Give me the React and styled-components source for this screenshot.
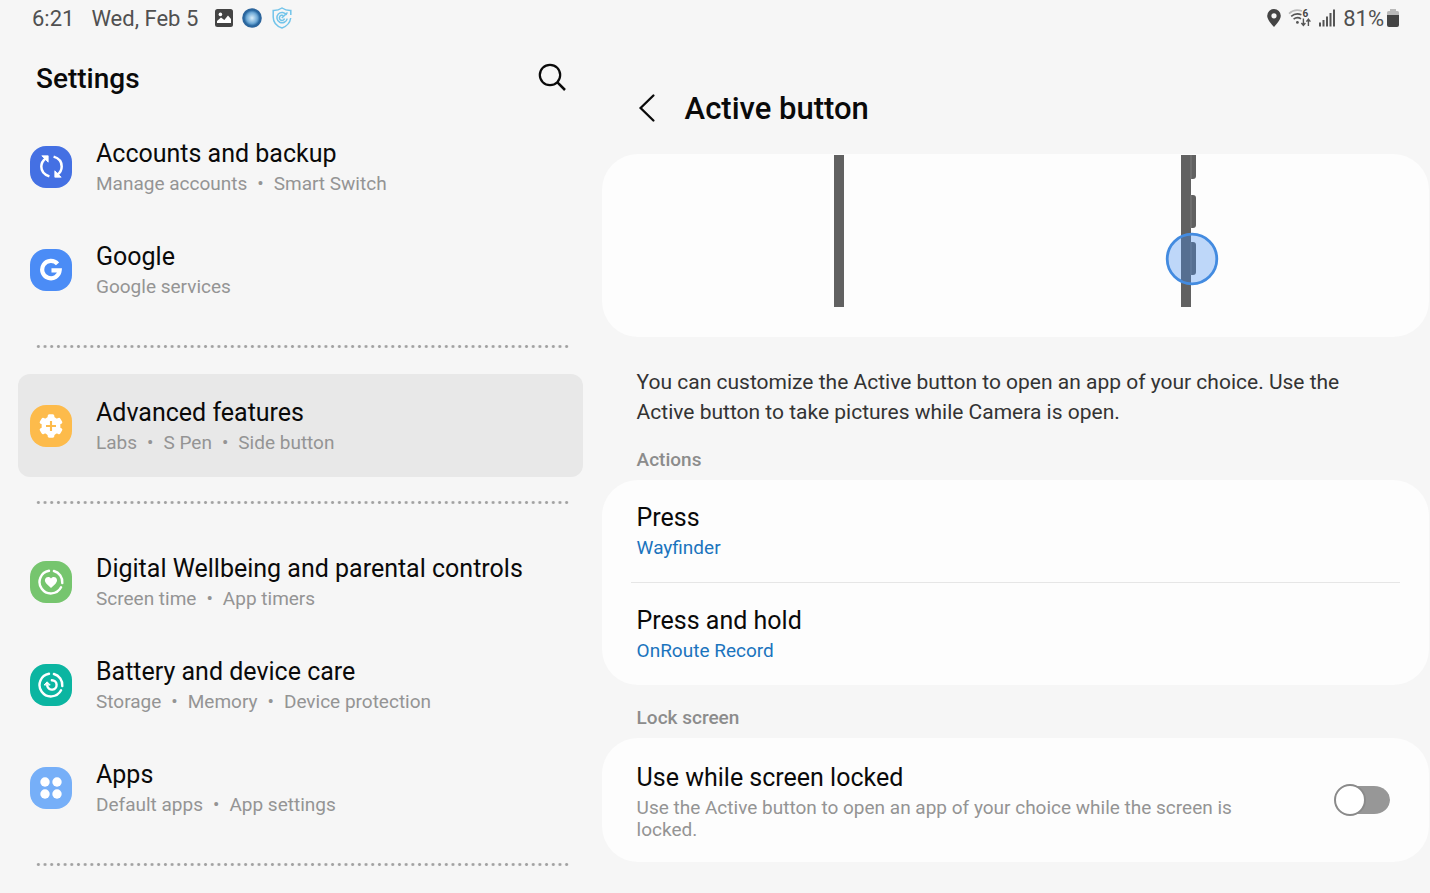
import React, { useState } from 'react';
import styled, { createGlobalStyle } from 'styled-components';

const GlobalStyle = createGlobalStyle`
  *, *::before {
    box-sizing: border-box;
  }

  body {
    margin: 0;
    background-color: #f6f6f6;
    color: #0a0a0a;
    font-family: Roboto, "Liberation Sans", sans-serif;
  }

  svg {
    display: block;
    flex: none;
  }

  h1, h2, h3, p {
    margin: 0;
  }

  button {
    padding: 0;
    border: 0;
    background: none;
    color: inherit;
    font: inherit;
    text-align: left;
    cursor: pointer;
  }
`;

const StatusBar = styled.header`
  display: flex;
  align-items: center;
  justify-content: space-between;
  height: 36px;
  padding: 0 31px 0 32px;
  color: #505050;
  font-size: 22px;
`;

const StatusGroup = styled.div`
  display: flex;
  align-items: center;
  gap: ${props => props.gap};
`;

const Battery = styled.span`
  display: flex;
  align-items: center;
  gap: 3px;
`;

const Panes = styled.div`
  display: grid;
  grid-template-columns: 42fr 58fr;
`;

const Sidebar = styled.aside`
  min-width: 0;
  padding: 0 18px;
`;

const SidebarHeader = styled.div`
  display: flex;
  align-items: center;
  justify-content: space-between;
  height: 79px;
  padding: 6px 16px 0 18px;

  h1 {
    align-self: flex-start;
    font-size: 28px;
    font-weight: 500;
    line-height: 74px;
  }

  button {
    align-self: flex-start;
    padding: 20px 0;
  }
`;

const MenuLink = styled.a`
  display: flex;
  align-items: center;
  gap: 24px;
  height: 103px;
  padding: 0 12px;
  border-radius: 12px;
  background-color: ${props => props.$selected ? '#e8e8e8' : 'transparent'};
  color: inherit;
  text-decoration: none;
`;

const Tile = styled.span`
  display: grid;
  place-items: center;
  flex: none;
  width: 42px;
  height: 42px;
  border-radius: 16px;
  background-color: ${props => props.color};
  color: white;
`;

const RowTitle = styled.span`
  display: block;
  font-size: 25px;
  line-height: 34px;
`;

const RowDetail = styled.span`
  display: block;
  color: ${props => props.$accent ? '#1b74bd' : '#949494'};
  font-size: 19px;
  line-height: 26px;
`;

const Bullet = styled.span`
  margin: 0 10px;
`;

const Divider = styled.div`
  height: 3px;
  margin: 24px 12px 26px 17px;
  background-image: radial-gradient(circle, #a2a2a2 1px, transparent 2px);
  background-size: calc(100% / 80) 3px;
`;

const Detail = styled.main`
  min-width: 0;
  padding: 0 1px;
`;

const DetailHeader = styled.div`
  display: flex;
  align-items: center;
  gap: 28px;
  height: 118px;
  padding: 26px 35px 0;

  h2 {
    font-size: 31px;
    font-weight: 500;
  }
`;

const Card = styled.section`
  border-radius: 36px;
  background-color: #fdfdfd;
`;

const Illustration = styled(Card)`
  display: flex;
  justify-content: center;
  height: 183px;
`;

const Description = styled.p`
  padding: 30px 35px 0;
  color: #333;
  font-size: 21px;
  line-height: 30px;
`;

const SectionLabel = styled.h3`
  padding: 13px 35px 0;
  color: #8c8c8c;
  font-size: 19px;
  font-weight: 500;
  line-height: 40px;
`;

const ActionButton = styled.button`
  display: block;
  width: calc(100% - 58px);
  height: 102px;
  margin-left: 29px;
  padding: 0 6px;

  & + & {
    height: 103px;
    border-top: 1px solid #e6e6e6;
  }
`;

const SwitchRow = styled.label`
  display: flex;
  align-items: center;
  justify-content: space-between;
  gap: 60px;
  height: 124px;
  padding: 0 39px 0 35px;
  cursor: pointer;
`;

const SwitchText = styled.span`
  max-width: 630px;
  padding-top: 4px;

  ${RowDetail} {
    line-height: 22px;
    padding: 2px 0;
  }
`;

const Switch = styled.input`
  appearance: none;
  position: relative;
  flex: none;
  width: 56px;
  height: 32px;
  margin: 0;
  border: solid transparent;
  border-width: 2px 0 2px 4px;
  border-radius: 16px;
  background: ${props => props.checked ? '#3e8ee0' : '#979797'} padding-box;
  cursor: pointer;

  &::before {
    content: '';
    position: absolute;
    top: -2px;
    left: ${props => props.checked ? '20px' : '-4px'};
    width: 32px;
    height: 32px;
    border: 2px solid #8a8a8a;
    border-radius: 50%;
    background-color: white;
  }
`;

const SyncIcon = () => (
  <svg width="25" height="25" viewBox="0 0 25 25" fill="none" stroke="currentColor" strokeWidth="2.5">
    <path d="M10.4 22.4C5 20.8 2.3 17 2.3 12.6C2.3 9.2 3.7 6.6 6.6 4.4" />
    <path d="M2.8 1.8H9.2V8.2Z" fill="currentColor" strokeWidth="0.8" strokeLinejoin="round" />
    <path d="M14.6 2.6C20 4.2 22.7 8 22.7 12.4C22.7 15.8 21.3 18.4 18.4 20.6" />
    <path d="M22.2 23.2H15.8V16.8Z" fill="currentColor" strokeWidth="0.8" strokeLinejoin="round" />
  </svg>
);

const GoogleIcon = () => (
  <svg width="24" height="24" viewBox="0 0 25 25" fill="none" stroke="currentColor" strokeWidth="4.4">
    <path d="M19.3 6.1A9.1 9.1 0 1 0 21.5 12.9H13" />
  </svg>
);

const FeaturesIcon = () => (
  <svg width="26" height="26" viewBox="0 0 27 27">
    <g fill="currentColor">
      <circle cx="13.5" cy="13.5" r="9.8" />
      {[0, 60, 120].map(angle => (
        <rect key={angle} x="10" y="1.2" width="7" height="24.6" rx="1.8" transform={`rotate(${angle} 13.5 13.5)`} />
      ))}
    </g>
    <path d="M13.5 8.3V18.7M8.3 13.5H18.7" stroke="#fdbb4b" strokeWidth="2.2" />
  </svg>
);

const Ring = ({ children }) => (
  <svg width="28" height="28" viewBox="0 0 29 29" fill="none" stroke="currentColor" strokeWidth="2.5" strokeLinecap="round">
    <path d="M17.5 3.1A11.8 11.8 0 0 1 26.2 15.6" />
    <path d="M24.9 20A11.8 11.8 0 1 1 12.4 2.9" />
    {children}
  </svg>
);

const WellbeingIcon = () => (
  <Ring>
    <path fill="currentColor" stroke="none" d="M14.5 20.8L9.8 16.2C5.6 12 10.8 6.9 14.5 10.9C18.2 6.9 23.4 12 19.2 16.2Z" />
  </Ring>
);

const CareIcon = () => (
  <Ring>
    <path d="M15.4 9.5A4.9 4.9 0 1 1 10.6 15.4" />
    <path d="M7.6 14.2L10.5 11.2L13.4 14.2Z" fill="currentColor" strokeWidth="1" strokeLinejoin="round" />
  </Ring>
);

const AppsIcon = () => (
  <svg width="24" height="24" viewBox="0 0 24 24" fill="currentColor">
    <circle cx="6" cy="6" r="4.7" />
    <circle cx="18" cy="6" r="4.7" />
    <circle cx="6" cy="18" r="4.7" />
    <circle cx="18" cy="18" r="4.7" />
  </svg>
);

const PictureIcon = () => (
  <svg width="18" height="18" viewBox="0 0 18 18">
    <rect width="18" height="18" rx="2.5" fill="#444" />
    <circle cx="5.4" cy="5.4" r="1.8" fill="white" />
    <path d="M2 14V12L6 8.6L9.3 11L13 6.4L16 10V14Z" fill="white" />
  </svg>
);

const OrbIcon = () => (
  <svg width="20" height="20" viewBox="0 0 20 20">
    <defs>
      <radialGradient id="orb">
        <stop offset="0" stopColor="#d9eefa" />
        <stop offset="0.55" stopColor="#6ea9d6" />
        <stop offset="0.8" stopColor="#2867a0" />
        <stop offset="1" stopColor="#2f649a" />
      </radialGradient>
    </defs>
    <circle cx="10" cy="10" r="9.8" fill="url(#orb)" />
  </svg>
);

const ShieldIcon = () => (
  <svg width="22" height="22" viewBox="0 0 20 22" fill="none" stroke="#72c4ea" strokeWidth="1.5">
    <path d="M18.8 8V3.5C15 3.6 12.6 2.8 10 1C7.4 2.8 5 3.6 1.2 3.5V10C1.2 15.5 4.6 19.2 10 21C15 19.2 18 16 18.7 11" />
    <path d="M14.6 8A5.2 5.2 0 1 0 15.2 11.6" />
    <path d="M11.5 8.7A2.6 2.6 0 1 0 12.5 11.5" />
    <path d="M9.8 11L15.5 5.5" />
  </svg>
);

const PinIcon = () => (
  <svg width="14" height="18" viewBox="0 0 14 18">
    <path fill="#444" fillRule="evenodd" d="M7 0A6.8 6.8 0 0 0 .2 6.8C.2 11.4 7 18 7 18S13.8 11.4 13.8 6.8A6.8 6.8 0 0 0 7 0ZM7 4.2A2.6 2.6 0 1 1 7 9.4A2.6 2.6 0 1 1 7 4.2Z" />
  </svg>
);

const WifiIcon = () => (
  <svg width="24" height="20" viewBox="0 0 24 20" fill="none" stroke="#555" strokeWidth="1.6">
    <path d="M1 5.6C4.6 2.2 9.6 1.4 14 3" stroke="#bbb" />
    <path d="M3.2 8.4C6 5.9 9.8 5.3 13.4 6.8" />
    <path d="M5.6 11.2C7.8 9.4 10.8 9.3 13 10.9" />
    <circle cx="9.4" cy="14.4" r="1.4" fill="#555" stroke="none" />
    <path d="M15.4 10.5V17M13.4 15L15.4 17.4L17.4 15M20.4 18V11.5M18.4 13.6L20.4 11.2L22.4 13.6" strokeWidth="1.4" />
    <text x="14.4" y="9.4" fill="#444" stroke="none" fontSize="10" fontWeight="700">6</text>
  </svg>
);

const SignalIcon = () => (
  <svg width="17" height="18" viewBox="0 0 17 18" fill="#555">
    <rect x="0" y="13.5" width="2" height="4" />
    <rect x="3.5" y="11" width="2" height="6.5" />
    <rect x="7" y="7.5" width="2" height="10" />
    <rect x="10.5" y="4" width="2" height="13.5" />
    <rect x="14" y="0.5" width="2" height="17" />
  </svg>
);

const BatteryIcon = () => (
  <svg width="12" height="18" viewBox="0 0 12 18">
    <path fill="#bababa" d="M3 0H9V2H10.5A1.5 1.5 0 0 1 12 3.5V7H0V3.5A1.5 1.5 0 0 1 1.5 2H3Z" />
    <path fill="#444" d="M0 6H12V16A2 2 0 0 1 10 18H2A2 2 0 0 1 0 16Z" />
  </svg>
);

const SearchIcon = () => (
  <svg width="30" height="30" viewBox="0 0 30 30" fill="none" stroke="#0a0a0a" strokeWidth="2.2">
    <circle cx="13" cy="13" r="10.2" />
    <path d="M20.2 20.2L28 28" strokeWidth="2.5" />
  </svg>
);

const BackIcon = () => (
  <svg width="20" height="28" viewBox="0 0 20 28" fill="none" stroke="#0a0a0a" strokeWidth="2.3" strokeLinecap="round">
    <path d="M16.4 1.5L3.6 14L16.4 26.5" />
  </svg>
);

const TabletDrawing = () => (
  <svg width="420" height="183" viewBox="0 0 420 183">
    <g fill="#616161">
      <rect x="29" y="1" width="10" height="152" />
      <rect x="376" y="1" width="10" height="152" />
      <path d="M386 1H391V22Q391 25 388 25H386Z" />
      <path d="M386 41H388Q391 41 391 44V71Q391 74 388 74H386Z" />
      <path d="M386 88H388Q391 88 391 91V118Q391 121 388 121H386Z" />
    </g>
    <path d="M386 1V25M386 41V74M386 88V121" stroke="#7d7d7d" strokeWidth="1" />
    <circle cx="387" cy="105" r="24.8" fill="#3f8df2" fillOpacity="0.33" stroke="#438be0" strokeWidth="2.8" />
  </svg>
);

const groups = [
  [
    { title: 'Accounts and backup', details: ['Manage accounts', 'Smart Switch'], color: '#4470e3', Icon: SyncIcon },
    { title: 'Google', details: ['Google services'], color: '#4b8cf6', Icon: GoogleIcon },
  ],
  [
    { title: 'Advanced features', details: ['Labs', 'S Pen', 'Side button'], color: '#fdbb4b', Icon: FeaturesIcon, selected: true },
  ],
  [
    { title: 'Digital Wellbeing and parental controls', details: ['Screen time', 'App timers'], color: '#76c56e', Icon: WellbeingIcon },
    { title: 'Battery and device care', details: ['Storage', 'Memory', 'Device protection'], color: '#0bb5a1', Icon: CareIcon },
    { title: 'Apps', details: ['Default apps', 'App settings'], color: '#76aff8', Icon: AppsIcon },
  ],
];

const MenuRow = ({ item }) => (
  <MenuLink href="#" $selected={item.selected} aria-current={item.selected ? 'page' : undefined}>
    <Tile color={item.color}><item.Icon /></Tile>
    <span>
      <RowTitle>{item.title}</RowTitle>
      <RowDetail>
        {item.details.map((detail, i) => (
          <React.Fragment key={detail}>
            {i > 0 && <Bullet>•</Bullet>}
            {detail}
          </React.Fragment>
        ))}
      </RowDetail>
    </span>
  </MenuLink>
);

const App = () => {
  const [locked, setLocked] = useState(false);

  return (
    <>
      <GlobalStyle />
      <StatusBar>
        <StatusGroup gap="17px">
          <span>6:21</span>
          <span>Wed, Feb 5</span>
          <StatusGroup gap="9px">
            <PictureIcon />
            <OrbIcon />
            <ShieldIcon />
          </StatusGroup>
        </StatusGroup>
        <StatusGroup gap="7px">
          <PinIcon />
          <WifiIcon />
          <SignalIcon />
          <Battery>81%<BatteryIcon /></Battery>
        </StatusGroup>
      </StatusBar>
      <Panes>
        <Sidebar>
          <SidebarHeader>
            <h1>Settings</h1>
            <button aria-label="Search"><SearchIcon /></button>
          </SidebarHeader>
          <nav>
            {groups.map(group => (
              <React.Fragment key={group[0].title}>
                {group.map(item => <MenuRow key={item.title} item={item} />)}
                <Divider />
              </React.Fragment>
            ))}
          </nav>
        </Sidebar>
        <Detail>
          <DetailHeader>
            <button aria-label="Back"><BackIcon /></button>
            <h2>Active button</h2>
          </DetailHeader>
          <Illustration>
            <TabletDrawing />
          </Illustration>
          <Description>
            You can customize the Active button to open an app of your choice. Use the Active button to take pictures while Camera is open.
          </Description>
          <SectionLabel>Actions</SectionLabel>
          <Card>
            <ActionButton>
              <RowTitle>Press</RowTitle>
              <RowDetail $accent>Wayfinder</RowDetail>
            </ActionButton>
            <ActionButton>
              <RowTitle>Press and hold</RowTitle>
              <RowDetail $accent>OnRoute Record</RowDetail>
            </ActionButton>
          </Card>
          <SectionLabel>Lock screen</SectionLabel>
          <Card>
            <SwitchRow htmlFor="use-locked">
              <SwitchText>
                <RowTitle>Use while screen locked</RowTitle>
                <RowDetail>Use the Active button to open an app of your choice while the screen is locked.</RowDetail>
              </SwitchText>
              <Switch id="use-locked" type="checkbox" checked={locked} onChange={e => setLocked(e.target.checked)} />
            </SwitchRow>
          </Card>
        </Detail>
      </Panes>
    </>
  );
}

export default App;
